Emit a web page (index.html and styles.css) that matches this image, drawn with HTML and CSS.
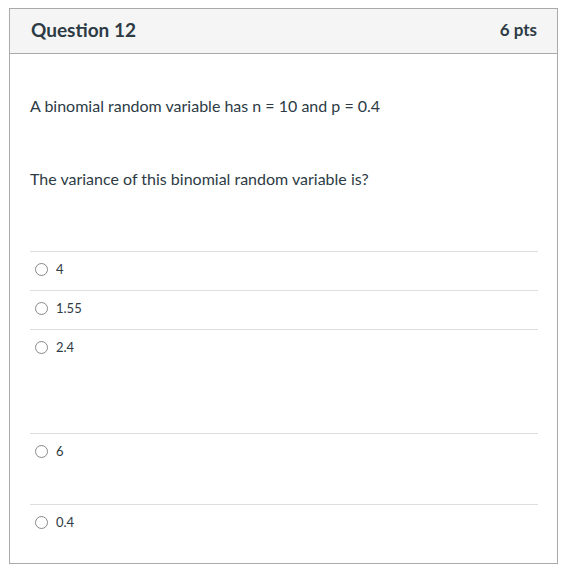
FILE: index.html
```html
<!DOCTYPE html>
<html>
<head>
<meta charset="utf-8">
<link rel="stylesheet" href="styles.css">
</head>
<body>
<div class="card">
  <div class="header">
    <span class="title">Question 12</span>
    <span class="pts">6 pts</span>
  </div>
  <div class="body">
    <div class="question">
      <p class="q1">A binomial random variable has n = 10 and p = 0.4</p>
      <p class="q2">The variance of this binomial random variable is?</p>
    </div>
    <div class="answers">
      <div class="answer"><span class="radio"></span><span class="label">4</span></div>
      <div class="answer"><span class="radio"></span><span class="label">1.55</span></div>
      <div class="answer tall"><span class="radio"></span><span class="label">2.4</span></div>
      <div class="answer mid"><span class="radio"></span><span class="label">6</span></div>
      <div class="answer last"><span class="radio"></span><span class="label">0.4</span></div>
    </div>
  </div>
</div>
</body>
</html>
```

FILE: styles.css
```css
html, body {
  margin: 0;
  background: #ffffff;
}
body {
  padding: 8px 0 0 9px;
  font-family: Lato, "Liberation Sans", sans-serif;
  color: #2d3b45;
}
.card {
  box-sizing: border-box;
  width: 549px;
  height: 556px;
  border: 1px solid #aaaaaa;
}
.header {
  box-sizing: border-box;
  height: 45px;
  background: #f5f5f5;
  border-bottom: 1px solid #aaaaaa;
  display: flex;
  align-items: center;
  justify-content: space-between;
  padding: 0 20px 3px 21px;
}
.title {
  font-size: 19px;
  font-weight: 700;
}
.pts {
  font-size: 17px;
  font-weight: 700;
}
.body {
  padding: 0 19px 0 20px;
}
.question {
  height: 197px;
  font-size: 16px;
}
.question p {
  margin: 0;
  line-height: 20px;
}
.q1 {
  padding-top: 42px;
}
.q2 {
  padding-top: 53px;
}
.answer {
  box-sizing: border-box;
  height: 39px;
  border-top: 1px solid #dddddd;
  display: flex;
  align-items: flex-start;
  padding-top: 9px;
  padding-left: 5px;
  font-size: 13px;
  line-height: 16px;
}
.answer.tall { height: 104px; }
.answer.mid { height: 71px; }
.answer.last { height: 58px; }
.radio {
  box-sizing: border-box;
  width: 13px;
  height: 13px;
  border: 1px solid #888888;
  border-radius: 50%;
  margin-top: 2px;
  margin-right: 8px;
}
.label {
  color: #2d3b45;
}
```
